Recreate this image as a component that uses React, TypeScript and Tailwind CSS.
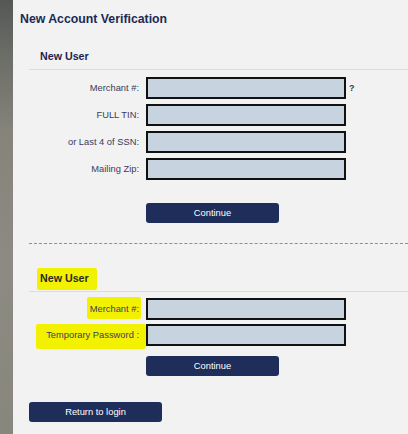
import React from "react"

const labelFont = { fontFamily: '"Liberation Sans", Arial, sans-serif' }

const Field = ({
  label,
  hint,
  mark,
}: {
  label: string
  hint?: boolean
  mark?: string
}) => (
  <div className="flex h-[22px] items-center">
    <div className="flex w-[110px] shrink-0 justify-end">
      <span className="relative text-[9.33px] leading-[12px] text-[#3d3b5c]">
        {mark && <span className={`absolute bg-[#f2f200] ${mark}`} />}
        <span className="relative">{label}</span>
      </span>
    </div>
    <input
      type="text"
      className="ml-[7px] h-[22px] w-[200px] shrink-0 border-2 border-[#111] bg-[#c8d3e0] outline-none"
    />
    {hint && (
      <span className="ml-[3px] mt-[2px] text-[9px] font-bold text-[#3a3a3a]">?</span>
    )}
  </div>
)

const NavyButton = ({ children, className = "" }: { children: React.ReactNode; className?: string }) => (
  <button
    className={`h-[20px] w-[133px] rounded-[3px] bg-[#1e2d5a] text-center text-[9.33px] leading-[18px] text-white ${className}`}
  >
    {children}
  </button>
)

export default function App() {
  return (
    <div className="flex min-h-[434px] w-full" style={labelFont}>
      <div className="w-[13px] shrink-0 bg-[linear-gradient(to_bottom,#545755_0%,#6a6c66_12%,#85837a_30%,#8c8a82_60%,#88877d_100%)]" />

      <div className="relative z-0 flex-1 bg-[#f1f2f1]">
        <h1 className="pl-[7px] pt-[12px] text-[12.3px] font-bold leading-[14px] text-[#1c2a55]">
          New Account Verification
        </h1>

        {/* primer acceso */}
        <div className="ml-[16px] mt-[24px]">
          <div className="border-b border-[#dcdcdc] pb-[7px] pl-[11px]">
            <h2 className="text-[10.7px] font-bold leading-[12px] text-[#241f4d]">
              New User
            </h2>
          </div>

          <div className="mt-[7px] flex flex-col gap-[5px]">
            <Field label="Merchant #:" hint />
            <Field label="FULL TIN:" />
            <Field label="or Last 4 of SSN:" />
            <Field label="Mailing Zip:" />
          </div>

          <NavyButton className="ml-[117px] mt-[23px] block">Continue</NavyButton>

          <div className="mt-[20px] border-t border-dashed border-[#8f8f8f]" />

          {/* clave temporal */}
          <div className="mt-[28px] border-b border-[#dcdcdc] pb-[7px] pl-[11px]">
            <h2 className="relative w-fit text-[10.7px] font-bold leading-[12px] text-[#2a2a20]">
              <span className="absolute -bottom-[6px] -left-[3px] -right-[8px] -top-[4px] rounded-[2px] bg-[#f2f200]" />
              <span className="relative">New User</span>
            </h2>
          </div>

          <div className="mt-[6px] flex flex-col gap-[4px]">
            <Field
              label="Merchant #:"
              mark="-left-[3px] -right-[2px] -top-[6px] -bottom-[4px] rounded-[2px]"
            />
            <Field
              label="Temporary Password :"
              mark="-left-[10px] -right-[7px] -top-[5px] -bottom-[8px] rounded-[2px]"
            />
          </div>

          <NavyButton className="ml-[117px] mt-[10px] block">Continue</NavyButton>

          <NavyButton className="mt-[26px] block">Return to login</NavyButton>
        </div>
      </div>
    </div>
  )
}
